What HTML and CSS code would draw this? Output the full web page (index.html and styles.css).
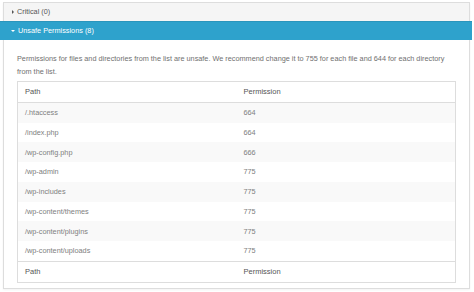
FILE: index.html
```html
<!DOCTYPE html>
<html lang="en">
<head>
  <meta charset="UTF-8">
  <title>Security check - Permissions</title>
  <link rel="stylesheet" href="styles.css">
</head>
<body>

  <div class="panel-group">
    <div class="panel-heading">
      <span class="caret caret-right"></span>Critical (0)
    </div>
    <div class="panel-heading active">
      <span class="caret caret-down"></span>Unsafe Permissions (8)
    </div>
    <div class="panel-body">
      <p>Permissions for files and directories from the list are unsafe. We recommend change it to 755 for each file and 644 for each directory from the list.</p>
      <table class="perm-table">
        <thead>
          <tr><th>Path</th><th>Permission</th></tr>
        </thead>
        <tbody>
          <tr><td>/.htaccess</td><td>664</td></tr>
          <tr><td>/index.php</td><td>664</td></tr>
          <tr><td>/wp-config.php</td><td>666</td></tr>
          <tr><td>/wp-admin</td><td>775</td></tr>
          <tr><td>/wp-includes</td><td>775</td></tr>
          <tr><td>/wp-content/themes</td><td>775</td></tr>
          <tr><td>/wp-content/plugins</td><td>775</td></tr>
          <tr><td>/wp-content/uploads</td><td>775</td></tr>
        </tbody>
        <tfoot>
          <tr><th>Path</th><th>Permission</th></tr>
        </tfoot>
      </table>
    </div>
  </div>

</body>
</html>
```

FILE: styles.css
```css
body {
  margin: 0;
  padding: 2px 4px 3px 3px;
  background: #fff;
  font-family: "Liberation Sans", Arial, sans-serif;
  font-size: 7.3px;
  color: #707070;
}
.panel-group {
  border: 1px solid #ddd;
  box-shadow: 0 1px 2px rgba(0,0,0,0.05);
}
.panel-heading {
  height: 18px;
  line-height: 18px;
  padding-left: 8px;
  background: #f5f5f5;
  color: #555;
}
.panel-heading.active {
  margin: 0 -3px 0 -4px;
  padding-left: 11px;
  background: #2ea2cc;
  color: #fff;
  border-top: 1px solid #2a95bc;
}
.caret {
  display: inline-block;
  width: 0;
  height: 0;
  margin-right: 3px;
  vertical-align: middle;
}
.caret-right {
  border-top: 2px solid transparent;
  border-bottom: 2px solid transparent;
  border-left: 2px solid #555;
}
.caret-down {
  border-left: 2px solid transparent;
  border-right: 2px solid transparent;
  border-top: 2px solid #fff;
}
.panel-body {
  padding: 12px 13px 5px 13px;
}
.panel-body p {
  margin: 0 0 3px;
  line-height: 13px;
}
.perm-table {
  width: 100%;
  border-collapse: collapse;
  border: 1px solid #ddd;
  color: #808080;
}
.perm-table th, .perm-table td {
  width: 50%;
  height: 19.75px;
  padding: 0 7px;
  text-align: left;
  font-weight: normal;
}
.perm-table th {
  color: #555;
  font-size: 7.5px;
}
.perm-table thead th { border-bottom: 1px solid #ddd; }
.perm-table tfoot th { border-top: 1px solid #ddd; }
.perm-table tbody tr:nth-child(odd) { background: #f9f9f9; }
```
